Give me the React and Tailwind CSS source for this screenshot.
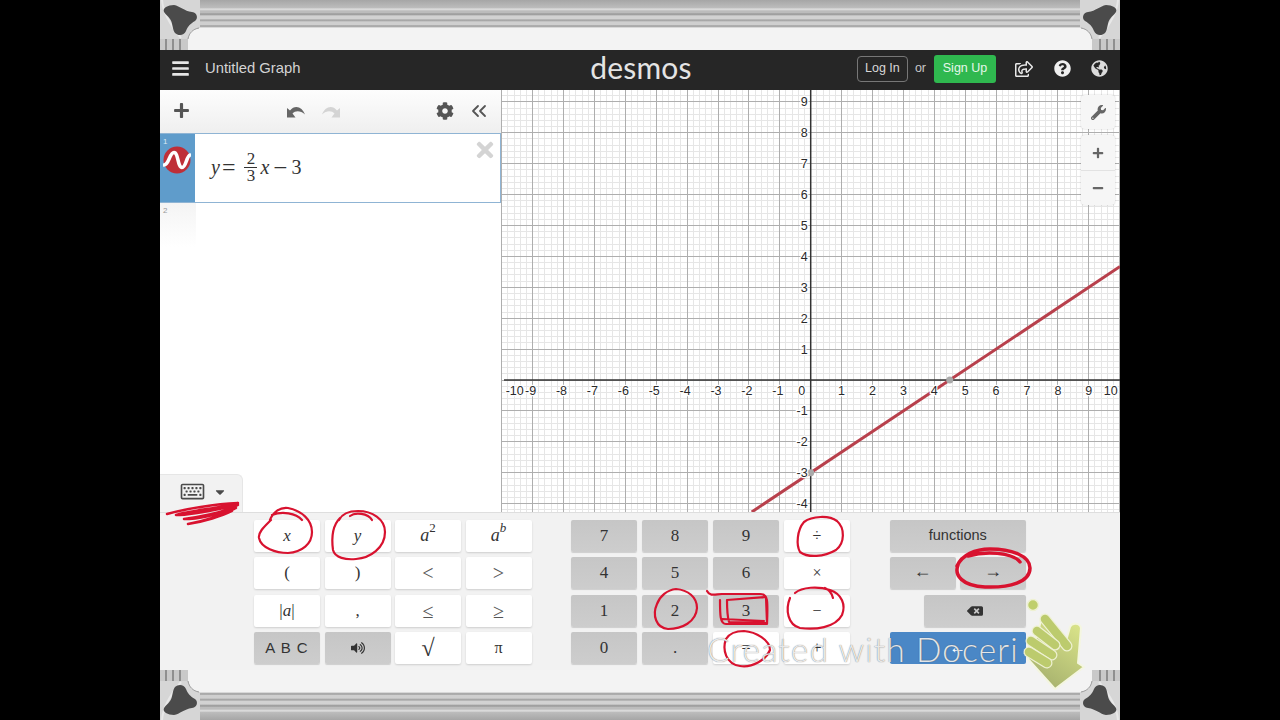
import { FaBars, FaPlus, FaCog, FaTimes, FaRegShareSquare, FaQuestionCircle, FaGlobeAmericas, FaWrench, FaMinus, FaRegKeyboard, FaCaretDown, FaVolumeUp, FaBackspace } from 'react-icons/fa';
import { ChevronsLeft } from 'lucide-react';

const SERIF = "font-['Liberation_Serif',serif]";

// graph scale, measured off the picture
const W = 619;
const H = 422;
const OX = 309.7;
const OY = 290;
const UNIT = 30.9;

function range(from, to) {
  const out = [];
  for (let i = from; i <= to; i++) out.push(i);
  return out;
}

function Corner({ className = '' }) {
  return (
    <svg width="40" height="50" viewBox="0 0 40 50" className={`shrink-0 ${className}`}>
      <rect width="40" height="50" fill="#f3f3f3" />
      <path d="M0 0H40V28C33 28 28 33 28 40V50H0Z" fill="#d6d6d6" />
      <path d="M2 0C3 14 11 26 21 38" stroke="#e8e8e8" strokeWidth="2" fill="none" />
      <path d="M4 12C2 8 8 5 14 5C20 6 24 11 32 12C38 13 38 19 35 21C30 24 28 26 26 31C24 36 18 36 15 33C12 29 13 23 10 19C8 16 6 15 4 12Z" fill="#4b4b4b" />
      <path d="M39 28C33 29 29 33 28 39" stroke="#999" strokeWidth="1" fill="none" />
      <path d="M0 39H28V50H0Z" fill="#c9c9c9" />
      <path d="M6 39V50M13 39V50M20 39V50" stroke="#8f8f8f" strokeWidth="2" />
    </svg>
  );
}

function MetalBars({ className = '' }) {
  return (
    <div className={`flex-1 h-[28px] bg-[linear-gradient(180deg,#a6a6a6_0,#bdbdbd_8px,#e4e4e4_9px,#bcbcbc_11px,#bcbcbc_13px,#8f8f8f_14px,#d2d2d2_16px,#d2d2d2_19px,#9a9a9a_20px,#cfcfcf_22px,#cfcfcf_25px,#8c8c8c_26px,#c8c8c8_27px,#e8e8e8_28px)] ${className}`} />
  );
}

function Frame({ bottom }) {
  return (
    <div className={`flex h-[50px] bg-[#f3f3f3] ${bottom ? 'items-end' : 'items-start'}`}>
      <Corner className={bottom ? '-scale-y-100' : ''} />
      <MetalBars className={bottom ? '-scale-y-100' : ''} />
      <Corner className={bottom ? '-scale-x-100 -scale-y-100' : '-scale-x-100'} />
    </div>
  );
}

function Navbar() {
  return (
    <div className="flex items-center h-[40px] pb-[3px] bg-[#262626] text-[#e8e8e8] font-['Liberation_Sans',sans-serif]">
      <div className="flex-1 flex items-center pl-[11px]">
        <FaBars className="w-[19px] h-[19px] text-[#e6e6e6]" />
        <span className="ml-[15px] text-[14.800px] text-[#d4d4d4]">Untitled Graph</span>
      </div>
      <span className="ml-[3px] font-['Lato',sans-serif] text-[30px] leading-none tracking-[0.200px] text-[#e4e4e4] -mt-[4px]">desmos</span>
      <div className="flex-1 flex items-center justify-end pr-[12px]">
        <span className="h-[26px] w-[51px] flex items-center justify-center rounded-[4px] border border-[#777] text-[12.500px] text-[#d8d8d8]">Log In</span>
        <span className="ml-[7px] text-[12.500px] text-[#c8c8c8]">or</span>
        <span className="ml-[8px] h-[28px] w-[62px] flex items-center justify-center rounded-[3px] bg-[#2fb84f] text-[12.500px] text-[#e6f7ea]">Sign Up</span>
        <FaRegShareSquare className="ml-[19px] w-[18px] h-[16px] text-[#e8e8e8]" />
        <FaQuestionCircle className="ml-[21px] w-[17px] h-[17px] text-[#efefef]" />
        <FaGlobeAmericas className="ml-[20px] w-[17px] h-[17px] text-[#dcdcdc]" />
      </div>
    </div>
  );
}

function SineBadge() {
  return (
    <svg width="28" height="28" viewBox="0 0 28 28">
      <circle cx="14" cy="14" r="13.500" fill="#bf2f38" />
      <path d="M1 19C6 19 6.500 6.500 11 6.500C15.500 6.500 14.500 21.500 19 21.500C23 21.500 23.500 10 27 9" stroke="#fff" strokeWidth="3.500" fill="none" strokeLinecap="round" />
    </svg>
  );
}

function Expression() {
  return (
    <div className="flex h-[70px] border-y border-[#8fb4d4]">
      <div className="w-[35px] bg-[#5f9ccb] text-[#dbe9f4] text-[8px] pl-[3px] pt-[3px] font-['Liberation_Sans',sans-serif] leading-[10px]">
        1
        <div className="-mt-[1.500px]"><SineBadge /></div>
      </div>
      <div className="relative flex-1 bg-white border-r border-[#8fb4d4] flex items-center pl-[16px] pb-[2px]">
        <div className={`${SERIF} flex items-center text-[20px] leading-none text-[#333]`}>
          <i>y</i>
          <span className="ml-[2px] text-[24px]">=</span>
          <span className="ml-[9px] flex flex-col items-center text-[17px] leading-[16px]">
            <span>2</span>
            <span className="w-[13px] border-t border-[#333]" />
            <span>3</span>
          </span>
          <i className="ml-[3px]">x</i>
          <span className="ml-[4px] text-[25px]">−</span>
          <span className="ml-[4px]">3</span>
        </div>
        <FaTimes className="absolute top-[4px] right-[3px] w-[24px] h-[24px] text-[#d4d4d4]" />
      </div>
    </div>
  );
}

function UndoArrow({ className = '' }) {
  return (
    <svg width="20" height="14" viewBox="0 0 20 14" className={className} fill="currentColor">
      <path d="M1 4L1 13.500L9.500 13.500L6.500 9.500C9.500 6.500 14.500 6.500 19 10.500C16.500 3 9 0 4 6.500Z" />
    </svg>
  );
}

function Sidebar() {
  return (
    <div className="w-[341px] flex flex-col bg-white">
      <div className="h-[43px] flex items-center pb-[2px] bg-[linear-gradient(180deg,#fdfdfd,#efefef)] text-[#555]">
        <FaPlus className="ml-[13px] w-[17px] h-[17px]" />
        <UndoArrow className="ml-[96px] text-[#666]" />
        <UndoArrow className="ml-[15px] -scale-x-100 text-[#d4d4d4]" />
        <FaCog className="ml-[95px] w-[18px] h-[18px]" />
        <ChevronsLeft className="ml-[13px] w-[24px] h-[24px]" strokeWidth={1.8} />
      </div>
      <Expression />
      <div className="flex h-[44px]">
        <div className="w-[36px] bg-[linear-gradient(180deg,#f4f4f4,#fff)] text-[#999] text-[8px] pl-[3px] pt-[3px] leading-[10px] font-['Liberation_Sans',sans-serif]">2</div>
      </div>
      <div className="flex-1" />
      <div className="w-[83px] h-[38px] pl-[20px] pb-[4px] flex items-center gap-[8px] rounded-tr-[6px] bg-[#f2f2f2] border-t border-r border-[#e6e6e6] text-[#4a4a4a]">
        <FaRegKeyboard className="w-[25px] h-[21px]" />
        <FaCaretDown className="w-[14px] h-[14px]" />
      </div>
    </div>
  );
}

function Graph() {
  const xs = range(-10, 10).filter((n) => n !== 0);
  const ys = range(-4, 9).filter((n) => n !== 0);
  return (
    <svg width={W} height={H} viewBox={`0 0 ${W} ${H}`} className="block font-['Liberation_Sans',sans-serif]">
      <rect width={W} height={H} fill="#fff" />
      <g shapeRendering="crispEdges">
        {range(-55, 55).map((i) => (
          <g key={i} stroke="#e6e6e6" strokeWidth="1">
            <line x1={OX + (i * UNIT) / 5} x2={OX + (i * UNIT) / 5} y1="0" y2={H} />
            <line y1={OY + (i * UNIT) / 5} y2={OY + (i * UNIT) / 5} x1="0" x2={W} />
          </g>
        ))}
        {range(-11, 11).map((i) => (
          <g key={i} stroke="#aeaeae" strokeWidth="1">
            <line x1={OX + i * UNIT} x2={OX + i * UNIT} y1="0" y2={H} />
            <line y1={OY + i * UNIT} y2={OY + i * UNIT} x1="0" x2={W} />
          </g>
        ))}
      </g>
      <line x1={OX} x2={OX} y1="0" y2={H} stroke="#333" strokeWidth="1.500" />
      <line y1={OY} y2={OY} x1="3" x2={W} stroke="#333" strokeWidth="1.500" />
      <line x1={OX - 59} y1={H} x2={W} y2={OY + 3 * UNIT - ((W - OX) * 2) / 3} stroke="#b8404c" strokeWidth="3" />
      <circle cx={OX} cy={OY + 3 * UNIT} r="3.500" fill="#aaa" />
      <circle cx={OX + 4.5 * UNIT} cy={OY} r="3.500" fill="#aaa" />
      {xs.map((n) => {
        // the two outermost labels are nudged so they stay in the panel
        const x = n === -10 ? OX - 10 * UNIT + 13 : n === 10 ? OX + 10 * UNIT - 9 : OX + n * UNIT - (n < 0 ? 2 : 0);
        return (
          <text key={n} x={x} y={OY + 15} textAnchor="middle" fontSize="12.500" fill="#2a2a2a" stroke="#fff" strokeWidth="2.500" paintOrder="stroke">
            {n}
          </text>
        );
      })}
      <text x={OX - 9} y={OY + 15} textAnchor="middle" fontSize="12.500" fill="#2a2a2a" stroke="#fff" strokeWidth="2.500" paintOrder="stroke">0</text>
      {ys.map((n) => (
        <text key={n} x={OX - 3} y={OY - n * UNIT + 4.500} textAnchor="end" fontSize="12.500" fill="#2a2a2a" stroke="#fff" strokeWidth="2.500" paintOrder="stroke">
          {n}
        </text>
      ))}
    </svg>
  );
}

function GraphTools() {
  return (
    <div className="absolute top-[5px] right-[5px] flex flex-col gap-[6px] w-[34px] text-[#666]">
      <div className="h-[34px] flex items-center justify-center rounded-[4px] bg-[#f6f6f6] shadow-[0_0_2px_rgba(0,0,0,0.2)]">
        <FaWrench className="w-[15px] h-[15px]" />
      </div>
      <div className="flex flex-col rounded-[4px] bg-[#f6f6f6] shadow-[0_0_2px_rgba(0,0,0,0.2)]">
        <div className="h-[36px] flex items-center justify-center border-b border-[#e2e2e2]"><FaPlus className="w-[12px] h-[12px]" /></div>
        <div className="h-[34px] flex items-center justify-center"><FaMinus className="w-[12px] h-[12px]" /></div>
      </div>
    </div>
  );
}

function Key({ gray, blue, className = '', children }) {
  const skin = blue
    ? 'bg-[#4a87c6] text-white'
    : gray
      ? 'bg-[linear-gradient(180deg,#c6c6c6,#cdcdcd)] shadow-[0_1px_1px_rgba(0,0,0,0.15)]'
      : 'bg-white shadow-[0_1px_2px_rgba(0,0,0,0.15)]';
  return (
    <div className={`h-[32px] flex items-center justify-center rounded-[2px] text-[#333] ${skin} ${className}`}>
      {children}
    </div>
  );
}

function MathKeys() {
  return (
    <div className={`${SERIF} grid grid-cols-[repeat(4,66px)] gap-x-[4.500px] gap-y-[5.500px] text-[17px]`}>
      <Key><i>x</i></Key>
      <Key><i>y</i></Key>
      <Key><i className="text-[18px]">a</i><sup className="text-[13px] -mt-[3px]">2</sup></Key>
      <Key><i className="text-[18px]">a</i><sup className="text-[13px] -mt-[3px]"><i>b</i></sup></Key>
      <Key>(</Key>
      <Key>)</Key>
      <Key className="text-[20px] text-[#555]">&lt;</Key>
      <Key className="text-[20px] text-[#555]">&gt;</Key>
      <Key>|<i>a</i>|</Key>
      <Key>,</Key>
      <Key className="text-[20px] text-[#555]">≤</Key>
      <Key className="text-[20px] text-[#555]">≥</Key>
      <Key gray className="font-['Liberation_Sans',sans-serif] text-[15px] tracking-[1px]">A B C</Key>
      <Key gray><FaVolumeUp className="w-[14px] h-[14px]" /></Key>
      <Key className="text-[24px]">√</Key>
      <Key className="text-[16px]">π</Key>
    </div>
  );
}

function NumberKeys() {
  return (
    <div className={`${SERIF} grid grid-cols-[repeat(4,66px)] gap-x-[5px] gap-y-[5.500px] text-[17px]`}>
      <Key gray>7</Key>
      <Key gray>8</Key>
      <Key gray>9</Key>
      <Key className="text-[16px]">÷</Key>
      <Key gray>4</Key>
      <Key gray>5</Key>
      <Key gray>6</Key>
      <Key className="text-[16px]">×</Key>
      <Key gray>1</Key>
      <Key gray>2</Key>
      <Key gray>3</Key>
      <Key className="text-[16px]">−</Key>
      <Key gray>0</Key>
      <Key gray>.</Key>
      <Key className="text-[16px]">=</Key>
      <Key className="text-[16px]">+</Key>
    </div>
  );
}

function ActionKeys() {
  return (
    <div className="grid grid-cols-[repeat(2,66px)] gap-x-[4.500px] gap-y-[5.500px] text-[14.500px] font-['Liberation_Sans',sans-serif]">
      <Key gray className="col-span-2">functions</Key>
      <Key gray className="text-[18px] font-bold pb-[3px] text-[#222]">←</Key>
      <Key gray className="text-[18px] font-bold pb-[3px] text-[#222]">→</Key>
      <Key gray className="col-span-2 w-[102px] justify-self-end"><FaBackspace className="w-[16px] h-[16px]" /></Key>
      <Key blue className="col-span-2 text-[17px]">←</Key>
    </div>
  );
}

function Keypad() {
  return (
    <div className="h-[158px] flex items-start pl-[94px] pt-[6.500px] gap-[39.500px] bg-[#f2f2f2] border-t border-[#dedede]">
      <MathKeys />
      <NumberKeys />
      <ActionKeys />
    </div>
  );
}

// the red pen marks drawn over the recording, in page coordinates
function InkMarks() {
  const ink = { stroke: '#d8122f', fill: 'none', strokeLinecap: 'round', strokeLinejoin: 'round' };
  return (
    <svg className="absolute inset-0 pointer-events-none" width="960" height="720" viewBox="160 0 960 720">
      <g {...ink} strokeWidth="2.200">
        <path d="M271 520C265 526 258 532 259 538C261 548 276 553 288 553C302 552 312 544 312 532C312 520 302 511 288 508C280 507 273 512 270 520M272 515C282 511 296 513 302 520" />
        <path d="M340 518C333 525 331 535 333 550C335 558 346 560 356 559C370 558 385 548 385 532C385 519 372 511 358 511C349 511 342 514 339 520M350 516C355 512 368 513 372 520" />
        <path d="M804 522C797 530 796 545 800 552C808 558 824 557 836 550C845 543 845 528 837 521C829 515 812 516 804 522" />
        <path d="M657 604C652 615 656 628 668 629C682 629 696 622 697 608C697 597 688 590 676 589C667 590 660 596 657 604" />
        <path d="M707 591C710 597 716 594 722 594L760 594C768 594 768 600 767 624L726 624C720 624 720 615 720 600M727 600L766 597L767 623L729 622C727 615 727 608 727 600M722 619L764 621" />
        <path d="M790 598C785 610 788 625 800 628C815 630 835 628 842 615C846 605 842 594 830 590C818 586 802 587 795 593M825 588C830 590 832 594 833 598" />
        <path d="M726 639C722 650 726 664 740 666C752 668 766 660 770 650C770 640 756 632 744 631C736 631 729 634 726 639" />
      </g>
      <g {...ink} strokeWidth="3.500">
        <path d="M958 565C954 575 962 586 985 587C1010 588 1030 582 1030 568C1030 556 1012 549 990 549C975 549 962 555 957 566M968 556C985 551 1012 552 1020 562" />
      </g>
      <g {...ink} strokeWidth="2.500">
        <path d="M167 514C185 509 215 504 238 503C225 508 190 510 176 515C195 515 222 508 238 505C225 512 198 517 184 519C200 519 222 513 236 508C222 516 200 522 188 524C204 522 222 516 232 511" />
      </g>
    </svg>
  );
}

function HandCursor() {
  const fingers = ['M25 24L47 51', 'M17 36L35 50', 'M11 46L32 60', 'M9 57L27 68'];
  return (
    <svg className="absolute left-[860px] top-[595px] pointer-events-none" width="100" height="100" viewBox="0 0 100 100">
      <defs>
        <linearGradient id="hand" x1="0.7" y1="0" x2="0.2" y2="1">
          <stop offset="0" stopColor="#dbe58a" />
          <stop offset="1" stopColor="#a3ae6c" />
        </linearGradient>
      </defs>
      <path d="M22 20L46 46L50 32C52 27 60 28 61 33L58 68L64 72L35 94L8 64L18 38Z" fill="url(#hand)" stroke="#f4f6e0" strokeWidth="2" strokeLinejoin="round" />
      {fingers.map((d) => (
        <g key={d} fill="none" strokeLinecap="round">
          <path d={d} stroke="#eef1d2" strokeWidth="11" />
          <path d={d} stroke="#bccb6d" strokeWidth="8.500" />
        </g>
      ))}
      <circle cx="13" cy="10" r="5.500" fill="#bfcf6c" stroke="#eef1d2" strokeWidth="1.500" />
    </svg>
  );
}

export default function App() {
  return (
    <div className="flex justify-center h-[720px] bg-black overflow-hidden">
      <div className="relative w-[960px] flex flex-col">
        <Frame />
        <Navbar />
        <div className="h-[422px] flex bg-white">
          <Sidebar />
          <div className="relative flex-1 overflow-hidden">
            <Graph />
            <GraphTools />
          </div>
        </div>
        <Keypad />
        <Frame bottom />
        <InkMarks />
        <span className="absolute left-[547px] top-[628px] font-['Lato',sans-serif] font-light text-[33.500px] leading-[42px] tracking-[1.100px] whitespace-nowrap text-white/85 [text-shadow:0_0_1px_rgba(70,70,70,0.9)]">
          Created with Doceri
        </span>
        <HandCursor />
      </div>
    </div>
  );
}
